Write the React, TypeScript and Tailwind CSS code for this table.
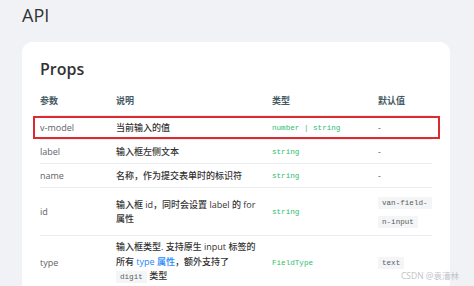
import React from 'react'

type Row = {
  name: string
  desc: React.ReactNode
  type: string
  def: React.ReactNode
  descLeading?: string
  defLeading?: string
}

const sans = 'font-["Open_Sans","Noto_Sans_CJK_SC",sans-serif]'

function Code({ children }: { children: React.ReactNode }) {
  return (
    <code className="bg-[#f4f5f7] px-[4px] py-[2px] font-['Liberation_Mono',monospace] text-[7.6px] text-[#5b5d60] [box-decoration-break:clone]">
      {children}
    </code>
  )
}

const rows: Row[] = [
  { name: 'v-model', desc: '当前输入的值', type: 'number | string', def: '-' },
  { name: 'label', desc: '输入框左侧文本', type: 'string', def: '-' },
  { name: 'name', desc: '名称，作为提交表单时的标识符', type: 'string', def: '-' },
  {
    name: 'id',
    desc: '输入框 id，同时会设置 label 的 for 属性',
    type: 'string',
    def: <Code>van-field-n-input</Code>,
    defLeading: 'leading-[17px]',
  },
  {
    name: 'type',
    desc: (
      <>
        输入框类型. 支持原生 input 标签的所有 <span className="text-[#1989fa]">type 属性</span>，额外支持了{' '}
        <Code>digit</Code> 类型
      </>
    ),
    type: 'FieldType',
    def: <Code>text</Code>,
    descLeading: 'leading-[14.5px]',
  },
]

export default function App() {
  return (
    <div className={`relative h-[286px] w-[474px] overflow-hidden bg-[#f0f2f5] ${sans}`}>
      <h1 className="pl-[22px] pt-[3px] text-[18px] leading-[24px] font-normal text-[#323233]">API</h1>

      <div className="ml-[22px] mt-[15px] w-[428px] rounded-[10px] bg-white px-[18px] pb-6 pt-[17px]">
        <h2 className="text-[16px] leading-[20px] font-semibold text-[#323233]">Props</h2>

        <div className="relative mt-[9px]">
          <table className="w-[392px] table-fixed border-collapse text-left">
            <colgroup>
              <col className="w-[76px]" />
              <col className="w-[156px]" />
              <col className="w-[106px]" />
              <col className="w-[54px]" />
            </colgroup>
            <thead>
              <tr className="border-b border-[#ebedf0]">
                {['参数', '说明', '类型', '默认值'].map((h) => (
                  <th
                    key={h}
                    className="pb-[7px] pt-[6px] align-middle text-[9px] leading-[14px] font-semibold text-[#455a64]"
                  >
                    {h}
                  </th>
                ))}
              </tr>
            </thead>
            <tbody>
              {rows.map((r) => (
                <tr key={r.name} className="border-b border-[#ebedf0]">
                  <td className="pb-[4px] pt-[5px] align-middle text-[9px] leading-[14px] text-[#5f6266]">
                    {r.name}
                  </td>
                  <td
                    className={`pb-[4px] pr-[14px] pt-[4px] align-middle text-[9px] font-medium text-[#323233] ${
                      r.descLeading ?? 'leading-[14px]'
                    }`}
                  >
                    {r.desc}
                  </td>
                  <td className="pb-[4px] pt-[5px] align-middle font-['Liberation_Mono',monospace] text-[7.6px] leading-[14px] text-[#2dbd6e]">
                    {r.type}
                  </td>
                  <td
                    className={`pb-[4px] pt-[5px] align-middle text-[9px] text-[#5f6266] ${
                      r.defLeading ?? 'leading-[14px]'
                    }`}
                  >
                    {r.def}
                  </td>
                </tr>
              ))}
            </tbody>
          </table>

          {/* highlight annotation */}
          <div className="pointer-events-none absolute left-[-7px] top-[28px] h-[23px] w-[407px] border-2 border-[#dc2a2f]" />
        </div>
      </div>

      <div className="absolute left-[401px] top-[270px] text-[8.5px] leading-[12px] text-[#bfc3c8]">
        CSDN @袁漕林
      </div>
    </div>
  )
}
